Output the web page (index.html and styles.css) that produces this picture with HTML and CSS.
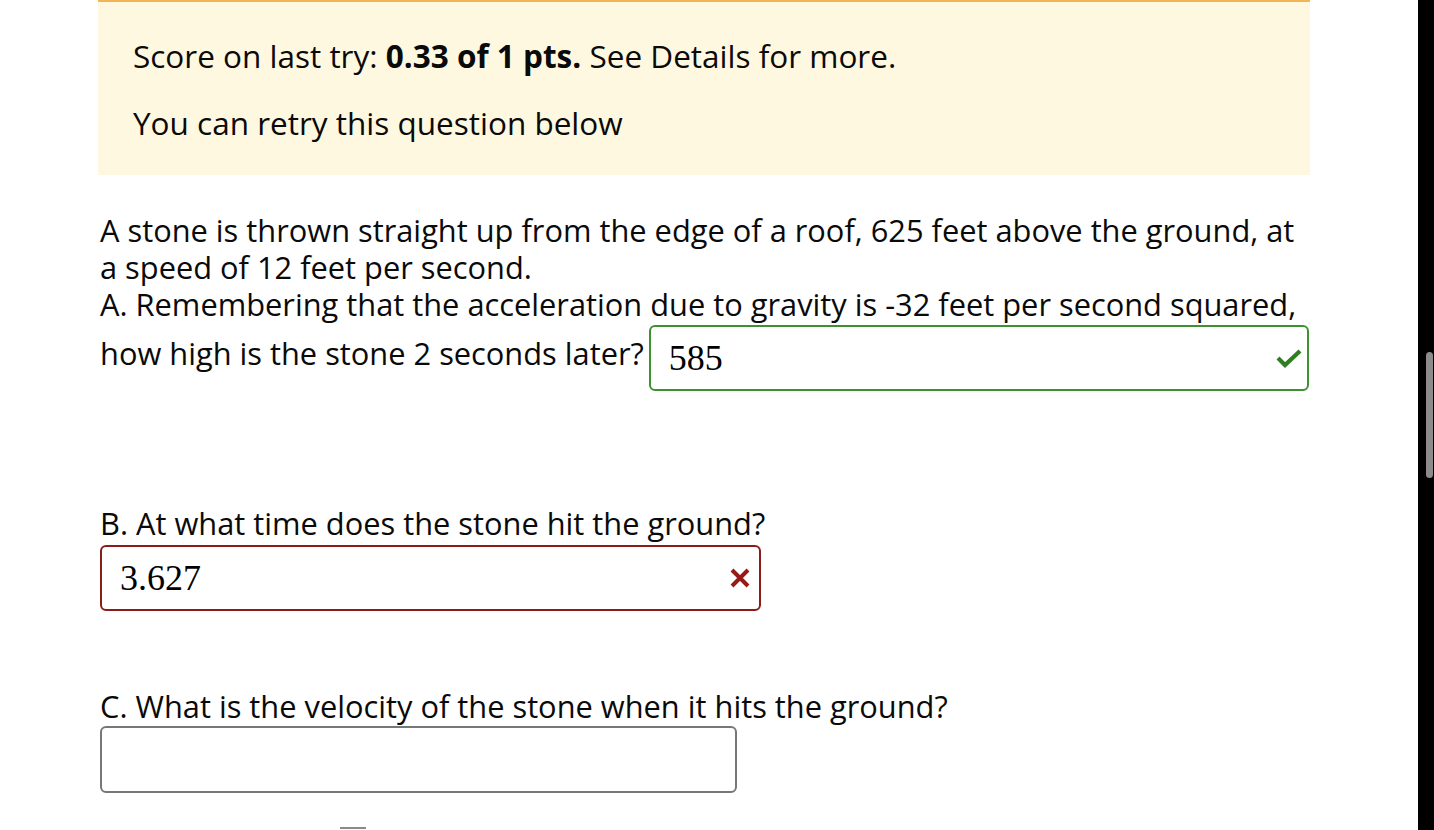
FILE: index.html
```html
<!DOCTYPE html>
<html>
<head>
<meta charset="utf-8">
<link rel="stylesheet" href="styles.css">
</head>
<body>
<div class="window">
  <main class="page">
    <div class="content">
      <div class="banner">
        <p class="banner-line">Score on last try: <b>0.33 of 1 pts.</b> See Details for more.</p>
        <p class="banner-line second">You can retry this question below</p>
      </div>
      <div class="question">
        <p class="intro"><span class="ln">A stone is thrown straight up from the edge of a roof, 625 feet above the ground, at</span> <span class="ln">a speed of 12 feet per second.</span><br><span class="ln">A. Remembering that the acceleration due to gravity is -32 feet per second squared,</span> <span class="ln">how high is the stone 2 seconds later?<span class="answer correct answer-a"><span class="val">585</span><svg class="mark" width="28" height="22" viewBox="0 0 28 22"><path d="M3 11 L10 18 L25 4" fill="none" stroke="#2f7f20" stroke-width="4.2"/></svg></span></span></p>
        <p class="part part-b">B. At what time does the stone hit the ground?</p>
        <div class="answer wrong answer-b"><span class="val">3.627</span><svg class="mark" width="22" height="22" viewBox="0 0 22 22"><path d="M3 3 L19 19 M19 3 L3 19" fill="none" stroke="#961b16" stroke-width="4"/></svg></div>
        <p class="part part-c">C. What is the velocity of the stone when it hits the ground?</p>
        <div class="answer empty answer-c"></div>
        <div class="stub"></div>
      </div>
    </div>
  </main>
  <div class="track"><div class="thumb"></div></div>
</div>
</body>
</html>
```
FILE: styles.css
```css
html, body {
  margin: 0;
  padding: 0;
  height: 100%;
  overflow: hidden;
  background: #fff;
}
.window {
  display: flex;
  height: 830px;
}
.page {
  flex: 1;
  overflow: hidden;
  background: #fff;
  font-family: "Open Sans", Lato, sans-serif;
  color: #0a0a0a;
}
.content {
  margin-left: 98px;
  width: 1212px;
}
.banner {
  background: #fff8e0;
  border-top: 2px solid #f3b456;
  height: 173px;
  padding-left: 35px;
  box-sizing: content-box;
}
.banner-line {
  margin: 0;
  font-size: 31.5px;
  line-height: 34px;
  padding-top: 37px;
}
.banner-line.second {
  padding-top: 33px;
}
.banner-line b {
  font-weight: 700;
}
.question {
  padding: 0 2px;
  font-size: 30.8px;
}
.ln {
  white-space: nowrap;
}
.intro {
  margin: 37px 0 0;
  line-height: 37px;
}
.answer {
  display: inline-flex;
  align-items: center;
  justify-content: space-between;
  box-sizing: border-box;
  height: 66px;
  border: 2px solid #777;
  border-radius: 6px;
  padding: 0 4px 0 18px;
  background: #fff;
  vertical-align: middle;
  line-height: 1;
  white-space: normal;
}
.answer .val {
  font-family: "Liberation Serif", "Times New Roman", serif;
  font-size: 36px;
  color: #000;
}
.correct {
  border-color: #3d922f;
}
.wrong {
  border-color: #8a1d17;
  padding-right: 8px;
}
.answer-a {
  width: 660px;
  margin-left: 5px;
  margin-top: 2px;
}
.answer-b {
  display: flex;
  width: 661px;
}
.answer-c {
  display: block;
  width: 637px;
  height: 67px;
}
.part {
  margin: 0;
  line-height: 37px;
}
.part-b {
  margin-top: 114px;
  margin-bottom: 3px;
}
.part-c {
  margin-top: 77px;
  margin-bottom: 1px;
}
.stub {
  width: 26px;
  height: 20px;
  margin: 34px 0 0 240px;
  border-top: 2px solid #8a8a8a;
}
.track {
  width: 16px;
  flex: none;
  background: #000;
  position: relative;
}
.thumb {
  position: absolute;
  left: 8px;
  top: 352px;
  width: 7px;
  height: 126px;
  border-radius: 4px;
  background: #8c8c8c;
}
```
